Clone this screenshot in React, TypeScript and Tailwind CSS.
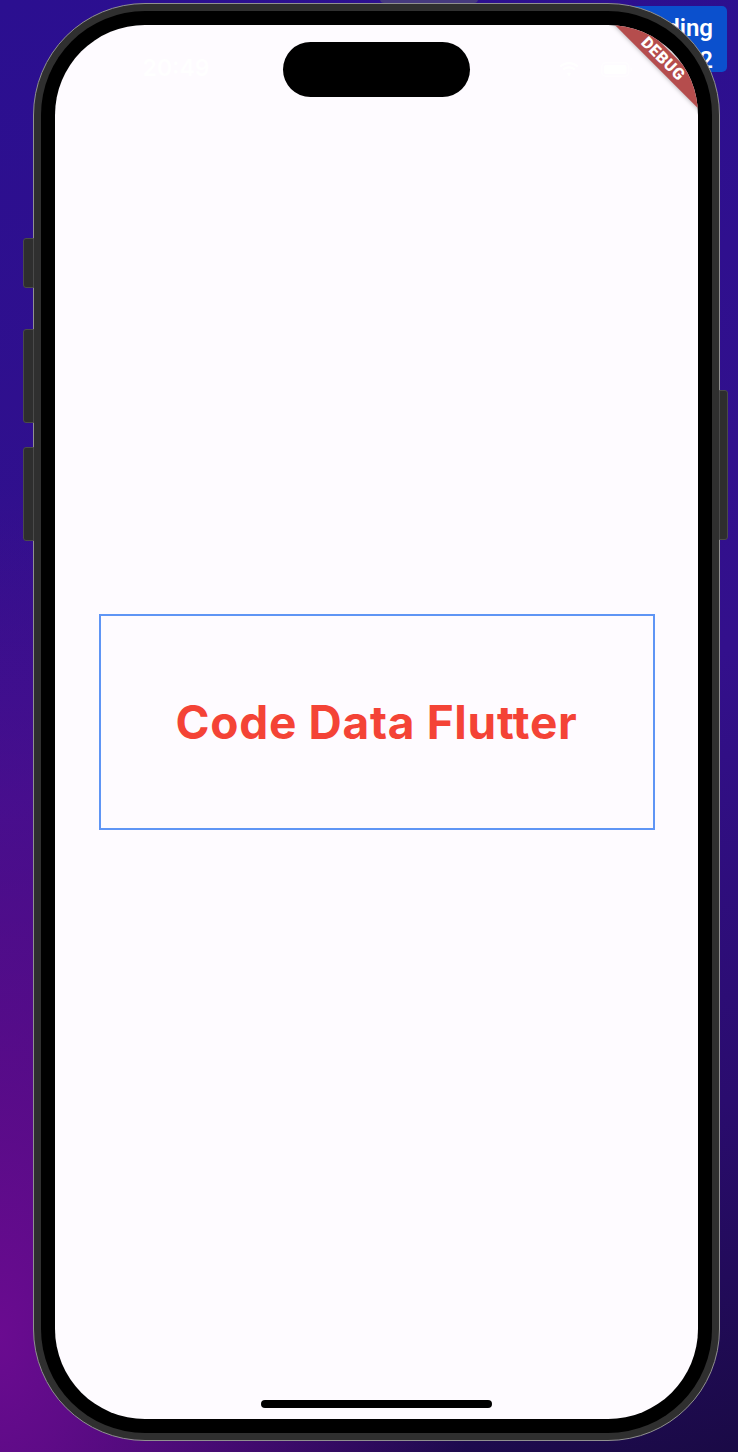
import React from "react";

function Wifi() {
  return (
    <svg width="20" height="15" viewBox="0 0 20 15" fill="#ffffff">
      <path d="M10 2.2c3 0 5.8 1.1 7.9 3.1l1.5-1.6C16.9 1.4 13.6 0 10 0S3.1 1.4.6 3.7l1.5 1.6C4.2 3.3 7 2.2 10 2.2z" />
      <path d="M10 6.4c1.9 0 3.6.7 4.9 1.9l1.5-1.6C14.7 5.1 12.4 4.2 10 4.2S5.3 5.1 3.6 6.7l1.5 1.6C6.4 7.1 8.1 6.4 10 6.4z" />
      <path d="M10 10.5c.8 0 1.5.3 2 .8L10 14.8 8 11.3c.5-.5 1.2-.8 2-.8z" />
    </svg>
  );
}

function Battery() {
  return (
    <svg width="32" height="15" viewBox="0 0 32 15">
      <rect x="0.75" y="0.75" width="27" height="13.5" rx="4" fill="none" stroke="#ffffff" strokeOpacity="0.6" strokeWidth="1.5" />
      <rect x="3" y="3" width="22.5" height="9" rx="2" fill="#ffffff" />
      <path d="M29.5 5v5c1-.4 1.7-1.4 1.7-2.5S30.5 5.4 29.5 5z" fill="#ffffff" fillOpacity="0.6" />
    </svg>
  );
}

export default function App() {
  return (
    <div className="relative w-[738px] h-[1452px] overflow-hidden pl-[33px] pt-[3px] bg-[radial-gradient(ellipse_at_0%_92%,#6a0b90_0%,rgba(106,11,144,0)_45%),linear-gradient(168deg,#2b0f90_0%,#33108c_50%,#2a0c6e_78%,#1a0a46_100%)] font-['Inter','Liberation_Sans',sans-serif]">
      {/* desktop windows behind the phone */}
      <div className="absolute left-[380px] top-[-10px] w-[98px] h-[13px] rounded-[4px] bg-[#463a7e]" />
      <div className="absolute left-[560px] top-[6px] w-[167px] h-[66px] rounded-[5px] bg-[#0b50cd] pr-[14px] pt-[6px] text-right text-white text-[24px] font-semibold leading-[32px] font-['Roboto','Liberation_Sans',sans-serif]">
        <div>Recording</div>
        <div>00:02</div>
      </div>

      {/* phone */}
      <div className="relative z-10 w-[687px] h-[1438px]">
        <div className="absolute left-[-10px] top-[235px] w-[11px] h-[50px] rounded-l-[3px] bg-[#2e2e2e] border border-[#4a4a4a]" />
        <div className="absolute left-[-10px] top-[326px] w-[11px] h-[94px] rounded-l-[3px] bg-[#2e2e2e] border border-[#4a4a4a]" />
        <div className="absolute left-[-10px] top-[444px] w-[11px] h-[94px] rounded-l-[3px] bg-[#2e2e2e] border border-[#4a4a4a]" />
        <div className="absolute right-[-8px] top-[387px] w-[9px] h-[150px] rounded-r-[3px] bg-[#2e2e2e] border border-[#4a4a4a]" />

        <div className="h-full rounded-[112px] bg-[#2f2f2f] border border-[#909090] p-[7px]">
          <div className="h-full rounded-[104px] bg-black p-[14px]">
            <div className="relative h-full overflow-hidden rounded-[90px] bg-[#fefbff] flex items-center justify-center">
              {/* status bar */}
              <div className="absolute inset-x-0 top-0 pt-[17px] flex items-start">
                <div className="w-[228px] pl-[14px] pt-[12px] flex justify-center">
                  <span className="text-[23px] font-semibold leading-[28px] text-white">20:49</span>
                </div>
                <div className="w-[187px] h-[55px] rounded-full bg-black" />
                <div className="flex-1 pl-[89px] pt-[20px] flex items-center gap-[22px]">
                  <Wifi />
                  <Battery />
                </div>
              </div>

              <div className="w-[556px] h-[216px] border-2 border-[#5f95f5] flex items-center justify-center">
                <span className="text-[46px] font-bold leading-none tracking-[0.7px] text-[#f44336]">Code Data Flutter</span>
              </div>

              {/* home indicator */}
              <div className="absolute inset-x-0 bottom-[11px] flex justify-center">
                <div className="w-[231px] h-[8px] rounded-full bg-black" />
              </div>

              {/* debug banner */}
              <div className="absolute left-[528px] top-[24px] w-[160px] h-[20px] rotate-45 bg-[#b54d4d] shadow-[0_0_5px_rgba(0,0,0,0.35)] flex items-center justify-center">
                <span className="text-[16px] font-black leading-none tracking-[0.6px] text-white font-['Roboto','Liberation_Sans',sans-serif]">DEBUG</span>
              </div>
            </div>
          </div>
        </div>
      </div>
    </div>
  );
}
